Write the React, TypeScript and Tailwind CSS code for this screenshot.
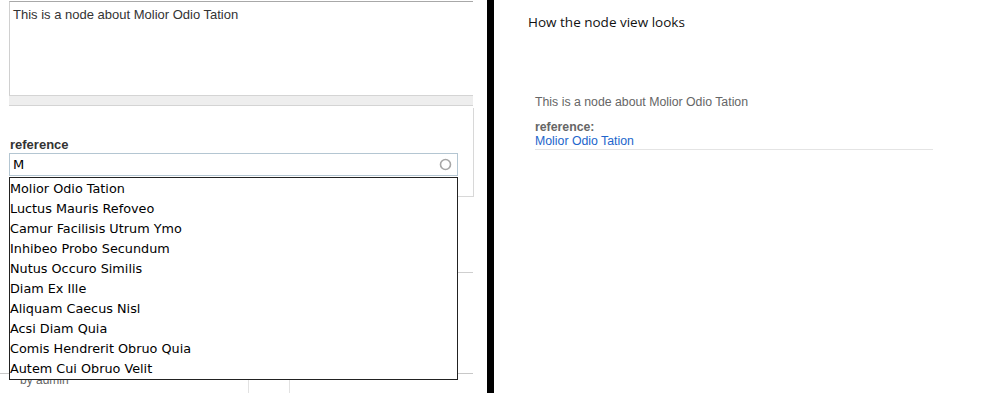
import React from "react";

const items = [
  "Molior Odio Tation",
  "Luctus Mauris Refoveo",
  "Camur Facilisis Utrum Ymo",
  "Inhibeo Probo Secundum",
  "Nutus Occuro Similis",
  "Diam Ex Ille",
  "Aliquam Caecus Nisl",
  "Acsi Diam Quia",
  "Comis Hendrerit Obruo Quia",
  "Autem Cui Obruo Velit",
];

export default function App() {
  return (
    <div className="flex h-[393px] w-[985px] overflow-hidden bg-white">
      {/* Left panel */}
      <div className="relative h-[393px] w-[487px] shrink-0 overflow-hidden">
        <div className="ml-[9px] mt-[1px] w-[464px]">
          <div
            className="h-[94px] border-l border-t border-l-[#d0d0d0] border-t-[#a8a8a8] pl-[3px] pt-[5px] text-[13px] leading-[16px] text-[#333]"
            style={{ fontFamily: '"Liberation Sans", Arial, sans-serif' }}
          >
            This is a node about Molior Odio Tation
          </div>
          <div className="h-[11px] border-y border-[#d4d4d4] bg-[#eeeeee]" />
        </div>

        <div className="ml-[9px] mt-[2px] h-[89px] w-[465px] border-b border-r border-[#d8d8d8] pt-[28px]">
          <div
            className="h-[17px] pl-[1px] text-[13px] font-bold leading-[17px] text-[#333]"
            style={{ fontFamily: '"Liberation Sans", Arial, sans-serif' }}
          >
            reference
          </div>
          <div className="flex h-[23px] w-[449px] items-center justify-between border border-[#b4c6d2] pl-[3px] pr-[5px]">
            <span
              className="text-[13px] leading-[17px] text-black"
              style={{ fontFamily: '"DejaVu Sans", Verdana, sans-serif' }}
            >
              M
            </span>
            <svg width="13" height="13" viewBox="0 0 13 13">
              <circle cx="6.5" cy="6.5" r="5" fill="none" stroke="#a6a6a6" strokeWidth="1.6" />
            </svg>
          </div>
        </div>

        <div className="ml-[9px] mt-[75px] w-[464px] border-t border-[#cfcfcf]" />

        <div className="absolute left-0 top-[373px] flex h-[20px] w-[473px] border-t border-[#c8c8c8]">
          <div
            className="w-[249px] border-r border-[#e2e2e2] pl-[20px] text-[12px] leading-[12px] text-[#666]"
            style={{ fontFamily: '"Liberation Sans", Arial, sans-serif' }}
          >
            by admin
          </div>
          <div className="w-[41px] border-r border-[#e2e2e2]" />
          <div className="flex-1" />
        </div>

        {/* Autocomplete dropdown */}
        <div
          className="absolute left-[9px] top-[177px] w-[449px] border border-[#222] bg-white pt-[1px]"
          style={{ fontFamily: '"DejaVu Sans", Verdana, sans-serif' }}
        >
          {items.map((it) => (
            <div key={it} className="h-[20px] text-[12.8px] leading-[20px] text-black">
              {it}
            </div>
          ))}
        </div>
      </div>

      {/* Divider */}
      <div className="h-[393px] w-[7px] shrink-0 bg-black" />

      {/* Right panel */}
      <div className="flex-1 pl-[34px] pt-[13px]">
        <div
          className="text-[13.5px] leading-[18px] text-[#111]"
          style={{ fontFamily: '"Open Sans", "Noto Sans", sans-serif' }}
        >
          How the node view looks
        </div>
        <div
          className="ml-[7px] mt-[64px] w-[398px] border-b border-[#e4e4e4] pb-[1px]"
          style={{ fontFamily: '"Liberation Sans", Arial, sans-serif' }}
        >
          <div className="text-[12.3px] leading-[14px] text-[#666]">
            This is a node about Molior Odio Tation
          </div>
          <div className="mt-[11px] text-[12.3px] font-bold leading-[14px] text-[#666]">
            reference:
          </div>
          <div className="text-[12.3px] leading-[14px] text-[#2266cc]">Molior Odio Tation</div>
        </div>
      </div>
    </div>
  );
}
